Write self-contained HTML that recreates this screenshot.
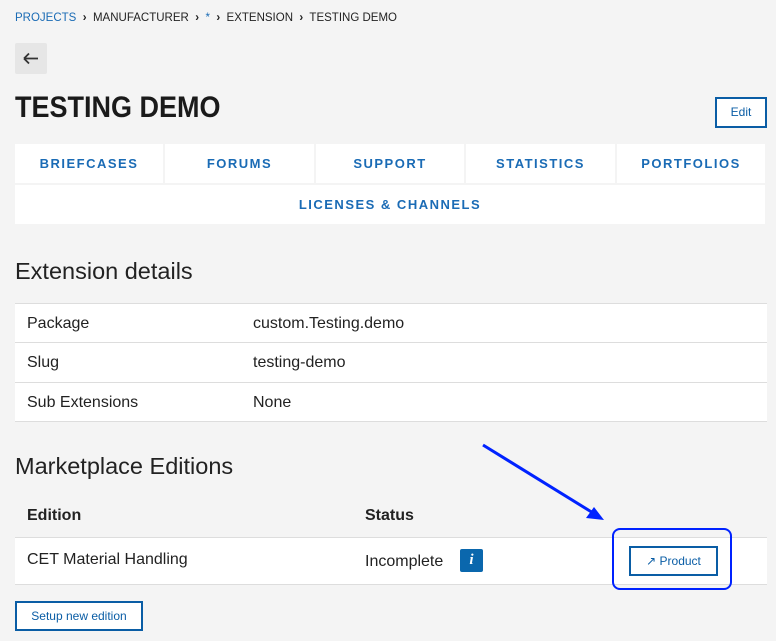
<!DOCTYPE html><html><head><style>
body{margin:0;background:#f4f4f4;font-family:"Liberation Sans",sans-serif;color:#222;width:776px;height:641px;overflow:hidden;position:relative}
.a{position:absolute}
.bc{left:15px;top:12px;font-size:11.5px;color:#222;white-space:nowrap}
.bc span.l{color:#1a6bb5}
.back{left:15px;top:43px;width:32px;height:31px;background:#e6e6e6;border-radius:2px}
h1{position:absolute;left:15px;top:91px;margin:0;font-size:30px;font-weight:bold;color:#1a1a1a;transform:scaleX(0.9);transform-origin:left}
.edit{left:715px;top:97px;width:52px;height:31px;border:2px solid #0a5da5;box-sizing:border-box;background:#fff;color:#0a5da5;font-size:12px;text-align:center;line-height:27px}
.tab{position:absolute;background:#fff;color:#1a6bb5;font-size:13px;font-weight:bold;letter-spacing:1.5px;text-align:center;line-height:39px;height:39px}
h2{position:absolute;margin:0;font-weight:normal;font-size:23.5px;color:#222;left:15px}
.row{position:absolute;left:15px;width:752px;background:#fff;border-top:1px solid #ddd;box-sizing:border-box;font-size:16px}
.row span{position:absolute;top:11px}
</style></head><body>
<div class="a bc"><span class="l">PROJECTS</span> &nbsp;<b>›</b>&nbsp; MANUFACTURER &nbsp;<b>›</b>&nbsp; <span class="l">*</span> &nbsp;<b>›</b>&nbsp; EXTENSION &nbsp;<b>›</b>&nbsp; TESTING DEMO</div>
<div class="a back"><svg width="32" height="31"><path d="M9 15.5H23M9 15.5L14 10.5M9 15.5L14 20.5" stroke="#333" stroke-width="1.8" fill="none"/></svg></div>
<h1>TESTING DEMO</h1>
<div class="a edit">Edit</div>
<div class="tab" style="left:15px;top:144px;width:148px">BRIEFCASES</div>
<div class="tab" style="left:165px;top:144px;width:149px">FORUMS</div>
<div class="tab" style="left:316px;top:144px;width:148px">SUPPORT</div>
<div class="tab" style="left:466px;top:144px;width:149px">STATISTICS</div>
<div class="tab" style="left:617px;top:144px;width:148px">PORTFOLIOS</div>
<div class="tab" style="left:15px;top:185px;width:750px">LICENSES &amp; CHANNELS</div>
<h2 style="top:258px">Extension details</h2>
<div class="row" style="top:303px;height:40px"><span style="left:12px">Package</span><span style="left:238px">custom.Testing.demo</span></div>
<div class="row" style="top:342px;height:40px"><span style="left:12px">Slug</span><span style="left:238px">testing-demo</span></div>
<div class="row" style="top:382px;height:40px;border-bottom:1px solid #ddd"><span style="left:12px">Sub Extensions</span><span style="left:238px">None</span></div>
<h2 style="top:453px">Marketplace Editions</h2>
<div class="a" style="left:27px;top:507px;font-size:16px;font-weight:bold">Edition</div>
<div class="a" style="left:365px;top:507px;font-size:16px;font-weight:bold">Status</div>
<div class="row" style="top:537px;height:48px;border-bottom:1px solid #ddd"><span style="left:12px;top:13px">CET Material Handling</span><span style="left:350px;top:15px">Incomplete</span>
<div class="a" style="left:445px;top:11px;width:23px;height:23px;background:#0a67ad;border-radius:2px;color:#fff;font-weight:bold;font-style:italic;font-family:'Liberation Serif',serif;text-align:center;line-height:23px;font-size:15px">i</div>
<div class="a" style="left:614px;top:8px;width:89px;height:30px;border:2px solid #0a5da5;box-sizing:border-box;color:#0a5da5;font-size:12px;line-height:26px;text-align:center">&#x2197;&#xFE0E; Product</div></div>
<div class="a" style="left:612px;top:528px;width:120px;height:62px;border:2.5px solid #0022ff;border-radius:8px;box-sizing:border-box"></div>
<svg class="a" style="left:0;top:0" width="776" height="641"><path d="M483 445L598 516" stroke="#0022ff" stroke-width="3"/><path d="M604 520L586 518L594 507Z" fill="#0022ff"/></svg>
<div class="a" style="left:15px;top:601px;width:128px;height:30px;border:2px solid #0a5da5;box-sizing:border-box;background:#fff;color:#0a5da5;font-size:12px;text-align:center;line-height:26px">Setup new edition</div>
</body></html>
